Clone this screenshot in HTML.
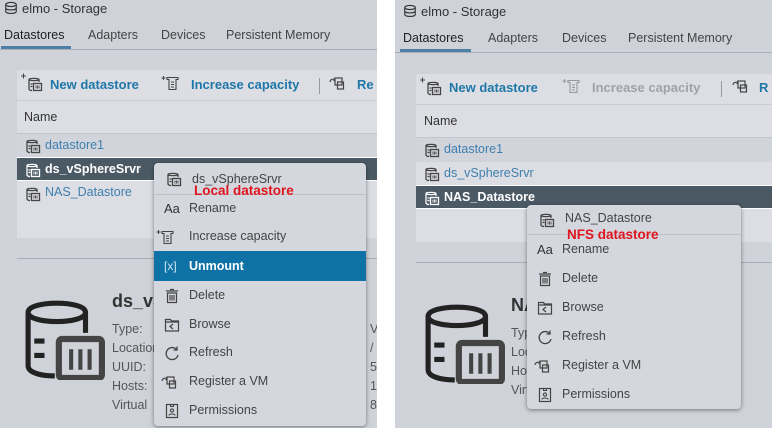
<!DOCTYPE html>
<html><head><meta charset="utf-8"><style>
*{margin:0;padding:0;box-sizing:border-box}
body{width:772px;height:428px;background:#fff;font-family:"Liberation Sans",sans-serif;position:relative;overflow:hidden;color:#333}
.p{position:absolute;top:0;width:377px;height:428px;background:#cfd2d9;overflow:hidden}
.a{position:absolute;white-space:nowrap}
.t{font-size:13px;color:#333}
.tab{font-size:12.5px;color:#444}
.tbl{position:absolute;left:17px;width:380px;background:#dcdee4}
.blue{color:#1f77a8;font-weight:bold;font-size:13px}
.row{position:absolute;left:17px;width:380px;height:24px;font-size:12.5px;color:#3f7fae;padding-left:28px;line-height:23px}
.sel{background:#4b5965;color:#fff;font-weight:bold;border-top:1px solid #fff;border-bottom:1px solid #fff}
.menu{position:absolute;background:#d5d7de;border-radius:4px;box-shadow:0 1px 4px rgba(0,0,0,.45)}
.mi{position:absolute;left:0;right:0;height:29px;font-size:12.5px;color:#444;padding-left:35px;line-height:29px}
.mi svg{position:absolute;left:10px;top:7px}
.hl{background:#0e72a6;color:#fff;font-weight:bold}
.red{color:#e0141e;font-weight:bold;font-size:13.5px}
.lbl{font-size:12.5px;color:#555}
svg.di{position:absolute}
</style></head><body>
<svg width="0" height="0" style="position:absolute"><defs>
<symbol id="ds" viewBox="0 0 16 16"><path d="M2 3.5C2 2 12 2 12 3.5V6M2 3.5V13C2 14 4 14.5 5 14.5M2 3.5C2 5 12 5 12 3.5M3.5 8h2M3.5 10.5h2" fill="none" stroke="#444" stroke-width="1.3"/><rect x="6.5" y="7.5" width="8" height="7" fill="none" stroke="#444" stroke-width="1.3"/><path d="M9 9.5v3M10.5 9.5v3M12 9.5v3" stroke="#444" stroke-width="0.9"/></symbol>
<symbol id="dsw" viewBox="0 0 16 16"><path d="M2 3.5C2 2 12 2 12 3.5V6M2 3.5V13C2 14 4 14.5 5 14.5M2 3.5C2 5 12 5 12 3.5M3.5 8h2M3.5 10.5h2" fill="none" stroke="#fff" stroke-width="1.3"/><rect x="6.5" y="7.5" width="8" height="7" fill="none" stroke="#fff" stroke-width="1.3"/><path d="M9 9.5v3M10.5 9.5v3M12 9.5v3" stroke="#fff" stroke-width="0.9"/></symbol>
<symbol id="big" viewBox="0 0 80 80"><path d="M4 14C4 2 60 2 60 14V34M4 14C4 26 60 26 60 14M4 14V66C4 74 20 76 30 76M10 42h10M10 56h10" fill="none" stroke="#222" stroke-width="5"/><rect x="34" y="40" width="42" height="38" rx="3" fill="none" stroke="#444" stroke-width="6"/><path d="M46 50v20M55 50v20M64 50v20" stroke="#444" stroke-width="4"/></symbol>
<symbol id="trash" viewBox="0 0 16 16"><path d="M2 3h12M6 1.5h4M3.5 5h9v9.5h-9zM6 7v5.5M8 7v5.5M10 7v5.5" fill="none" stroke="#444" stroke-width="1.2"/></symbol>
<symbol id="brw" viewBox="0 0 16 16"><path d="M1.5 2.5h5l1 1.5h7v10h-13zM1.5 5h13M9 7l-3 2.5 3 2.5" fill="none" stroke="#444" stroke-width="1.2"/></symbol>
<symbol id="ref" viewBox="0 0 16 16"><path d="M13 5A6 6 0 1 0 14 10M13 1.5V5H9.5" fill="none" stroke="#444" stroke-width="1.3"/></symbol>
<symbol id="reg" viewBox="0 0 16 16"><path d="M1 7a3 3 0 0 1 5-2M5 3.5l1 1.5-1.5.8" fill="none" stroke="#444" stroke-width="1.1"/><rect x="6" y="3" width="7" height="7" fill="none" stroke="#444" stroke-width="1.2"/><rect x="8.5" y="7" width="6" height="7" fill="none" stroke="#444" stroke-width="1.2"/></symbol>
<symbol id="perm" viewBox="0 0 16 16"><rect x="2.5" y="1.5" width="11" height="13" fill="none" stroke="#444" stroke-width="1.2"/><path d="M6.5 1.5V3.5h3V1.5M5 12.5c0-2 6-2 6 0" fill="none" stroke="#444" stroke-width="1.1"/><circle cx="8" cy="7.5" r="1.6" fill="none" stroke="#444" stroke-width="1.1"/></symbol>
<symbol id="inc" viewBox="0 0 20 16"><path d="M0.5 3h4M2.5 1v4" stroke="#444" stroke-width="1"/><path d="M6 2.5h11v2h-2v10H8v-10H6z M10 7h3M10 9.5h3M10 12h3" fill="none" stroke="#444" stroke-width="1.1"/></symbol>
<symbol id="db" viewBox="0 0 16 16"><ellipse cx="8" cy="4" rx="6" ry="2.3" fill="none" stroke="#333" stroke-width="1.3"/><path d="M2 4v8c0 3 12 3 12 0V4M2 8c0 3 12 3 12 0" fill="none" stroke="#333" stroke-width="1.3"/></symbol>
</defs></svg>

<!-- LEFT PANEL -->
<div class="p" style="left:0">
<svg class="di" style="left:4px;top:1px" width="14" height="14"><use href="#db"/></svg>
<div class="a t" style="left:22px;top:1px">elmo - Storage</div>
<div class="a tab" style="left:4px;top:28px;color:#222">Datastores</div>
<div class="a tab" style="left:88px;top:28px">Adapters</div>
<div class="a tab" style="left:161px;top:28px">Devices</div>
<div class="a tab" style="left:226px;top:28px">Persistent Memory</div>
<div class="a" style="left:0;top:49px;width:377px;height:1px;background:#a9adb5"></div>
<div class="a" style="left:1px;top:46px;width:70px;height:3px;background:#4e7fa7"></div>
<div class="tbl" style="top:70px;height:168px"></div>
<div class="a" style="left:17px;top:100px;width:380px;height:1px;background:#c9ccd3"></div>
<div class="a" style="left:17px;top:133px;width:380px;height:1px;background:#c3c6cd"></div>
<svg class="di" style="left:20px;top:73px" width="26" height="20" viewBox="0 0 26 20"><path d="M1 3h5M3.5 0.5v5" stroke="#444" stroke-width="1"/><use href="#ds" x="7" y="3" width="16" height="16"/></svg>
<div class="a blue" style="left:50px;top:77px">New datastore</div>
<svg class="di" style="left:161px;top:75px" width="24" height="18"><use href="#inc" width="20" height="16"/></svg>
<div class="a blue" style="left:191px;top:77px">Increase capacity</div>
<div class="a" style="left:319px;top:78px;width:1px;height:16px;background:#999"></div>
<svg class="di" style="left:328px;top:75px" width="20" height="18"><use href="#reg" width="18" height="16"/></svg>
<div class="a blue" style="left:357px;top:77px">Re</div>
<div class="a" style="left:24px;top:110px;font-size:12.5px;color:#333">Name</div>
<div class="row" style="top:134px;background:#d1d4db">datastore1</div>
<div class="row sel" style="top:157px">ds_vSphereSrvr</div>
<div class="row" style="top:181px">NAS_Datastore</div>
<svg class="di" style="left:25px;top:138px" width="16" height="16"><use href="#ds"/></svg>
<svg class="di" style="left:25px;top:162px" width="16" height="16"><use href="#dsw"/></svg>
<svg class="di" style="left:25px;top:186px" width="16" height="16"><use href="#ds"/></svg>
<div class="a" style="left:17px;top:258px;width:360px;height:1px;background:#a9adb5"></div>
<svg class="di" style="left:24px;top:298px" width="82" height="82"><use href="#big"/></svg>
<div class="a" style="left:112px;top:291px;font-size:18px;font-weight:bold;color:#333">ds_vSphereSrvr</div>
<div class="a lbl" style="left:112px;top:322px">Type:</div>
<div class="a lbl" style="left:112px;top:341px">Location:</div>
<div class="a lbl" style="left:112px;top:360px">UUID:</div>
<div class="a lbl" style="left:112px;top:379px">Hosts:</div>
<div class="a lbl" style="left:112px;top:398px">Virtual</div>
<div class="a lbl" style="left:370px;top:322px">V</div>
<div class="a lbl" style="left:370px;top:341px">/</div>
<div class="a lbl" style="left:370px;top:360px">5</div>
<div class="a lbl" style="left:370px;top:379px">1</div>
<div class="a lbl" style="left:370px;top:398px">8</div>
<div class="menu" style="left:154px;top:163px;width:212px;height:263px">
 <svg class="di" style="left:12px;top:8px" width="16" height="16"><use href="#ds"/></svg>
 <div class="a" style="left:38px;top:9px;font-size:12.5px;color:#444">ds_vSphereSrvr</div>
 <div class="a" style="left:0;top:31px;width:212px;height:1px;background:#bfc2c9"></div>
 <div class="a red" style="left:40px;top:20px">Local datastore</div>
 <div class="mi" style="top:31px"><span class="a" style="left:10px;font-size:13px;color:#333">Aa</span>Rename</div>
 <div class="mi" style="top:59px"><svg width="20" height="16" style="left:2px"><use href="#inc" width="20" height="16"/></svg>Increase capacity</div>
 <div class="mi hl" style="top:88px;height:30px;line-height:30px"><span class="a" style="left:10px;font-weight:normal;font-size:12px;color:#cfe6f3">[x]</span>Unmount</div>
 <div class="mi" style="top:118px"><svg width="16" height="16"><use href="#trash"/></svg>Delete</div>
 <div class="mi" style="top:147px"><svg width="16" height="16"><use href="#brw"/></svg>Browse</div>
 <div class="mi" style="top:175px"><svg width="16" height="16"><use href="#ref"/></svg>Refresh</div>
 <div class="mi" style="top:204px"><svg width="18" height="16" style="left:6px"><use href="#reg" width="18" height="16"/></svg>Register a VM</div>
 <div class="mi" style="top:233px"><svg width="16" height="16"><use href="#perm"/></svg>Permissions</div>
</div>
</div>

<!-- RIGHT PANEL -->
<div class="p" style="left:395px">
<svg class="di" style="left:8px;top:4px" width="14" height="14"><use href="#db"/></svg>
<div class="a t" style="left:26px;top:4px">elmo - Storage</div>
<div class="a tab" style="left:8px;top:31px;color:#222">Datastores</div>
<div class="a tab" style="left:93px;top:31px">Adapters</div>
<div class="a tab" style="left:167px;top:31px">Devices</div>
<div class="a tab" style="left:233px;top:31px">Persistent Memory</div>
<div class="a" style="left:0;top:52px;width:377px;height:1px;background:#a9adb5"></div>
<div class="a" style="left:5px;top:49px;width:71px;height:3px;background:#4e7fa7"></div>
<div class="tbl" style="left:21px;top:74px;height:168px"></div>
<div class="a" style="left:21px;top:104px;width:380px;height:1px;background:#c9ccd3"></div>
<div class="a" style="left:21px;top:137px;width:380px;height:1px;background:#c3c6cd"></div>
<svg class="di" style="left:24px;top:77px" width="26" height="20" viewBox="0 0 26 20"><path d="M1 3h5M3.5 0.5v5" stroke="#444" stroke-width="1"/><use href="#ds" x="7" y="3" width="16" height="16"/></svg>
<div class="a blue" style="left:54px;top:80px">New datastore</div>
<svg class="di" style="left:167px;top:78px;opacity:.45" width="24" height="18"><use href="#inc" width="20" height="16"/></svg>
<div class="a blue" style="left:197px;top:80px;color:#9ea3ab;font-weight:bold">Increase capacity</div>
<div class="a" style="left:326px;top:81px;width:1px;height:16px;background:#999"></div>
<svg class="di" style="left:336px;top:78px" width="20" height="18"><use href="#reg" width="18" height="16"/></svg>
<div class="a blue" style="left:364px;top:80px">R</div>
<div class="a" style="left:29px;top:114px;font-size:12.5px;color:#333">Name</div>
<div class="row" style="left:21px;top:138px;background:#d1d4db">datastore1</div>
<div class="row" style="left:21px;top:162px">ds_vSphereSrvr</div>
<div class="row sel" style="left:21px;top:185px">NAS_Datastore</div>
<svg class="di" style="left:29px;top:142px" width="16" height="16"><use href="#ds"/></svg>
<svg class="di" style="left:29px;top:166px" width="16" height="16"><use href="#ds"/></svg>
<svg class="di" style="left:29px;top:190px" width="16" height="16"><use href="#dsw"/></svg>
<div class="a" style="left:21px;top:262px;width:360px;height:1px;background:#a9adb5"></div>
<svg class="di" style="left:29px;top:302px" width="82" height="82"><use href="#big"/></svg>
<div class="a" style="left:116px;top:295px;font-size:18px;font-weight:bold;color:#333">NAS</div>
<div class="a lbl" style="left:116px;top:326px">Type:</div>
<div class="a lbl" style="left:116px;top:345px">Location:</div>
<div class="a lbl" style="left:116px;top:364px">Hosts:</div>
<div class="a lbl" style="left:116px;top:383px">Virtual</div>
<div class="menu" style="left:132px;top:205px;width:214px;height:204px">
 <svg class="di" style="left:12px;top:7px" width="16" height="16"><use href="#ds"/></svg>
 <div class="a" style="left:38px;top:6px;font-size:12.5px;color:#444">NAS_Datastore</div>
 <div class="a" style="left:0;top:29px;width:214px;height:1px;background:#bfc2c9"></div>
 <div class="a red" style="left:40px;top:22px">NFS datastore</div>
 <div class="mi" style="top:30px"><span class="a" style="left:10px;font-size:13px;color:#333">Aa</span>Rename</div>
 <div class="mi" style="top:59px"><svg width="16" height="16"><use href="#trash"/></svg>Delete</div>
 <div class="mi" style="top:88px"><svg width="16" height="16"><use href="#brw"/></svg>Browse</div>
 <div class="mi" style="top:117px"><svg width="16" height="16"><use href="#ref"/></svg>Refresh</div>
 <div class="mi" style="top:146px"><svg width="18" height="16" style="left:6px"><use href="#reg" width="18" height="16"/></svg>Register a VM</div>
 <div class="mi" style="top:175px"><svg width="16" height="16"><use href="#perm"/></svg>Permissions</div>
</div>
</div>
</body></html>
